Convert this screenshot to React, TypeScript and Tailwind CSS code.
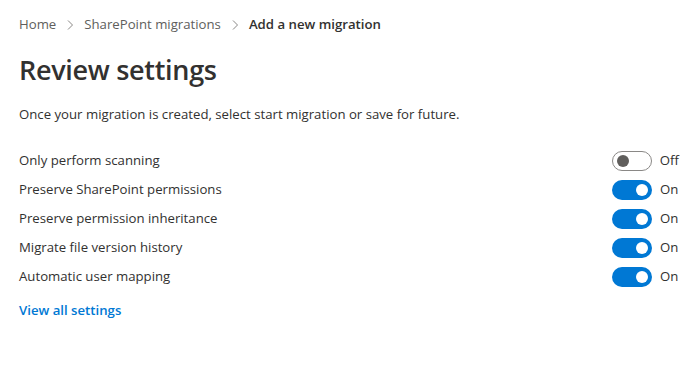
const SETTINGS: { label: string; on: boolean }[] = [
  { label: 'Only perform scanning', on: false },
  { label: 'Preserve SharePoint permissions', on: true },
  { label: 'Preserve permission inheritance', on: true },
  { label: 'Migrate file version history', on: true },
  { label: 'Automatic user mapping', on: true },
];

function Toggle({ on }: { on: boolean }) {
  return (
    <div className="flex items-center gap-[8px]">
      {on ? (
        <span className="flex h-[20px] w-[40px] items-center justify-end rounded-full bg-[#0078d4] pr-[4px]">
          <span className="h-[12px] w-[12px] rounded-full bg-white" />
        </span>
      ) : (
        <span className="flex h-[20px] w-[40px] items-center rounded-full border border-[#8a8886] bg-white pl-[4px]">
          <span className="h-[12px] w-[12px] rounded-full bg-[#605e5c]" />
        </span>
      )}
      <span className="text-[13.2px] text-[#323130]">{on ? 'On' : 'Off'}</span>
    </div>
  );
}

function Chevron() {
  return (
    <svg width="10" height="12" viewBox="0 0 10 12" className="mx-[9px]">
      <path d="M3 1.5 L7.5 6 L3 10.5" fill="none" stroke="#8a8886" strokeWidth="1" />
    </svg>
  );
}

export default function App() {
  return (
    <div
      className="min-h-[379px] bg-white px-[19px] pt-[15px] text-[#323130]"
      style={{ fontFamily: '"Open Sans", "Noto Sans", sans-serif' }}
    >
      {/* Breadcrumb */}
      <nav className="flex h-[20px] items-center text-[13.2px]">
        <span className="text-[#605e5c]">Home</span>
        <Chevron />
        <span className="text-[#605e5c]">SharePoint migrations</span>
        <Chevron />
        <span className="font-semibold text-[#323130]">Add a new migration</span>
      </nav>

      <h1 className="mt-[18px] text-[27px] font-semibold leading-[34px] tracking-[-0.3px]">
        Review settings
      </h1>

      <p className="mt-[17px] text-[13.2px] leading-[20px]">
        Once your migration is created, select start migration or save for future.
      </p>

      <div className="mt-[22px] flex flex-col">
        {SETTINGS.map((s) => (
          <div key={s.label} className="flex h-[29px] items-center justify-between">
            <span className="text-[13.2px]">{s.label}</span>
            <div className="w-[67px]">
              <Toggle on={s.on} />
            </div>
          </div>
        ))}
      </div>

      <a className="mt-[10px] block text-[13.2px] font-semibold text-[#0078d4]">View all settings</a>
    </div>
  );
}
